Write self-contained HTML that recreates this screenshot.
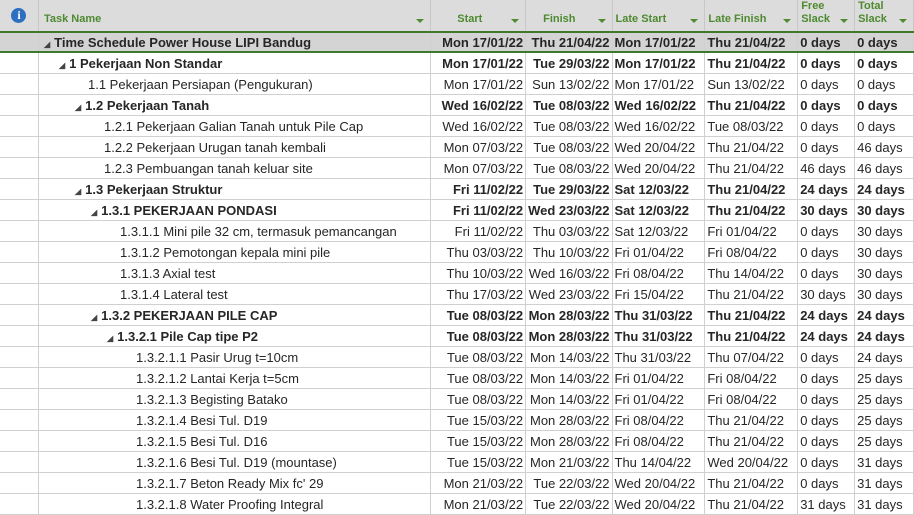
<!DOCTYPE html><html><head><style>
body{margin:0;width:914px;height:514px;overflow:hidden;background:#fff;font-family:"Liberation Sans",Arial,sans-serif;font-size:13px;color:#262626}
table{border-collapse:collapse;table-layout:fixed;position:absolute;left:0;top:0}
td{height:20px;border-right:1px solid #d0d0d0;border-bottom:1px solid #d0d0d0;padding:0 2px;white-space:nowrap;overflow:hidden}
th{height:26px;background:#dcdcdc;color:#4e8a30;font-size:11px;font-weight:bold;text-align:left;vertical-align:bottom;padding:0 3px 5px;border-right:1px solid #c8c8c8;position:relative;line-height:13px}
th .a{position:absolute;right:6px;bottom:8px;width:0;height:0;border-left:4px solid transparent;border-right:4px solid transparent;border-top:4px solid #4e8a30}
.r{text-align:right}
.b{font-weight:bold}
tr.g td{background:#d4d4d4;border-top:2px solid #3d7a2d;border-bottom:2px solid #3d7a2d;height:18px}
.t{font-size:8px;color:#444;margin-right:4px}
</style></head><body>
<table>
<colgroup><col style="width:39px"><col style="width:393px"><col style="width:95px"><col style="width:85px"><col style="width:93px"><col style="width:93px"><col style="width:57px"><col style="width:59px"></colgroup>
<tr><th style="text-align:center;vertical-align:middle;padding:0"><span style="display:inline-block;width:15px;height:15px;border-radius:50%;background:#2f6fc0;color:#fff;font:bold 12px 'Liberation Serif',serif;line-height:15px;text-align:center">i</span></th>
<th style="padding-left:5px">Task Name<span class="a" style="right:6px"></span></th>
<th style="padding-left:26px">Start<span class="a"></span></th>
<th style="padding-left:17px">Finish<span class="a"></span></th>
<th>Late Start<span class="a"></span></th>
<th>Late Finish<span class="a"></span></th>
<th>Free<br>Slack<span class="a"></span></th>
<th>Total<br>Slack<span class="a"></span></th></tr>
<tr class="g b"><td></td><td style="padding-left:5px"><span class="t">◢</span>Time Schedule Power House LIPI Bandug</td><td class="r">Mon 17/01/22</td><td class="r">Thu 21/04/22</td><td>Mon 17/01/22</td><td>Thu 21/04/22</td><td>0 days</td><td>0 days</td></tr>
<tr class="b"><td></td><td style="padding-left:20px"><span class="t">◢</span>1 Pekerjaan Non Standar</td><td class="r">Mon 17/01/22</td><td class="r">Tue 29/03/22</td><td>Mon 17/01/22</td><td>Thu 21/04/22</td><td>0 days</td><td>0 days</td></tr>
<tr><td></td><td style="padding-left:49px">1.1 Pekerjaan Persiapan (Pengukuran)</td><td class="r">Mon 17/01/22</td><td class="r">Sun 13/02/22</td><td>Mon 17/01/22</td><td>Sun 13/02/22</td><td>0 days</td><td>0 days</td></tr>
<tr class="b"><td></td><td style="padding-left:36px"><span class="t">◢</span>1.2 Pekerjaan Tanah</td><td class="r">Wed 16/02/22</td><td class="r">Tue 08/03/22</td><td>Wed 16/02/22</td><td>Thu 21/04/22</td><td>0 days</td><td>0 days</td></tr>
<tr><td></td><td style="padding-left:65px">1.2.1 Pekerjaan Galian Tanah untuk Pile Cap</td><td class="r">Wed 16/02/22</td><td class="r">Tue 08/03/22</td><td>Wed 16/02/22</td><td>Tue 08/03/22</td><td>0 days</td><td>0 days</td></tr>
<tr><td></td><td style="padding-left:65px">1.2.2 Pekerjaan Urugan tanah kembali</td><td class="r">Mon 07/03/22</td><td class="r">Tue 08/03/22</td><td>Wed 20/04/22</td><td>Thu 21/04/22</td><td>0 days</td><td>46 days</td></tr>
<tr><td></td><td style="padding-left:65px">1.2.3 Pembuangan tanah keluar site</td><td class="r">Mon 07/03/22</td><td class="r">Tue 08/03/22</td><td>Wed 20/04/22</td><td>Thu 21/04/22</td><td>46 days</td><td>46 days</td></tr>
<tr class="b"><td></td><td style="padding-left:36px"><span class="t">◢</span>1.3 Pekerjaan Struktur</td><td class="r">Fri 11/02/22</td><td class="r">Tue 29/03/22</td><td>Sat 12/03/22</td><td>Thu 21/04/22</td><td>24 days</td><td>24 days</td></tr>
<tr class="b"><td></td><td style="padding-left:52px"><span class="t">◢</span>1.3.1 PEKERJAAN PONDASI</td><td class="r">Fri 11/02/22</td><td class="r">Wed 23/03/22</td><td>Sat 12/03/22</td><td>Thu 21/04/22</td><td>30 days</td><td>30 days</td></tr>
<tr><td></td><td style="padding-left:81px">1.3.1.1 Mini pile 32 cm, termasuk pemancangan</td><td class="r">Fri 11/02/22</td><td class="r">Thu 03/03/22</td><td>Sat 12/03/22</td><td>Fri 01/04/22</td><td>0 days</td><td>30 days</td></tr>
<tr><td></td><td style="padding-left:81px">1.3.1.2 Pemotongan kepala mini pile</td><td class="r">Thu 03/03/22</td><td class="r">Thu 10/03/22</td><td>Fri 01/04/22</td><td>Fri 08/04/22</td><td>0 days</td><td>30 days</td></tr>
<tr><td></td><td style="padding-left:81px">1.3.1.3 Axial test</td><td class="r">Thu 10/03/22</td><td class="r">Wed 16/03/22</td><td>Fri 08/04/22</td><td>Thu 14/04/22</td><td>0 days</td><td>30 days</td></tr>
<tr><td></td><td style="padding-left:81px">1.3.1.4 Lateral test</td><td class="r">Thu 17/03/22</td><td class="r">Wed 23/03/22</td><td>Fri 15/04/22</td><td>Thu 21/04/22</td><td>30 days</td><td>30 days</td></tr>
<tr class="b"><td></td><td style="padding-left:52px"><span class="t">◢</span>1.3.2 PEKERJAAN PILE CAP</td><td class="r">Tue 08/03/22</td><td class="r">Mon 28/03/22</td><td>Thu 31/03/22</td><td>Thu 21/04/22</td><td>24 days</td><td>24 days</td></tr>
<tr class="b"><td></td><td style="padding-left:68px"><span class="t">◢</span>1.3.2.1 Pile Cap tipe P2</td><td class="r">Tue 08/03/22</td><td class="r">Mon 28/03/22</td><td>Thu 31/03/22</td><td>Thu 21/04/22</td><td>24 days</td><td>24 days</td></tr>
<tr><td></td><td style="padding-left:97px">1.3.2.1.1 Pasir Urug t=10cm</td><td class="r">Tue 08/03/22</td><td class="r">Mon 14/03/22</td><td>Thu 31/03/22</td><td>Thu 07/04/22</td><td>0 days</td><td>24 days</td></tr>
<tr><td></td><td style="padding-left:97px">1.3.2.1.2 Lantai Kerja t=5cm</td><td class="r">Tue 08/03/22</td><td class="r">Mon 14/03/22</td><td>Fri 01/04/22</td><td>Fri 08/04/22</td><td>0 days</td><td>25 days</td></tr>
<tr><td></td><td style="padding-left:97px">1.3.2.1.3 Begisting Batako</td><td class="r">Tue 08/03/22</td><td class="r">Mon 14/03/22</td><td>Fri 01/04/22</td><td>Fri 08/04/22</td><td>0 days</td><td>25 days</td></tr>
<tr><td></td><td style="padding-left:97px">1.3.2.1.4 Besi Tul. D19</td><td class="r">Tue 15/03/22</td><td class="r">Mon 28/03/22</td><td>Fri 08/04/22</td><td>Thu 21/04/22</td><td>0 days</td><td>25 days</td></tr>
<tr><td></td><td style="padding-left:97px">1.3.2.1.5 Besi Tul. D16</td><td class="r">Tue 15/03/22</td><td class="r">Mon 28/03/22</td><td>Fri 08/04/22</td><td>Thu 21/04/22</td><td>0 days</td><td>25 days</td></tr>
<tr><td></td><td style="padding-left:97px">1.3.2.1.6 Besi Tul. D19 (mountase)</td><td class="r">Tue 15/03/22</td><td class="r">Mon 21/03/22</td><td>Thu 14/04/22</td><td>Wed 20/04/22</td><td>0 days</td><td>31 days</td></tr>
<tr><td></td><td style="padding-left:97px">1.3.2.1.7 Beton Ready Mix fc' 29</td><td class="r">Mon 21/03/22</td><td class="r">Tue 22/03/22</td><td>Wed 20/04/22</td><td>Thu 21/04/22</td><td>0 days</td><td>31 days</td></tr>
<tr><td></td><td style="padding-left:97px">1.3.2.1.8 Water Proofing Integral</td><td class="r">Mon 21/03/22</td><td class="r">Tue 22/03/22</td><td>Wed 20/04/22</td><td>Thu 21/04/22</td><td>31 days</td><td>31 days</td></tr>
</table>
</body></html>
